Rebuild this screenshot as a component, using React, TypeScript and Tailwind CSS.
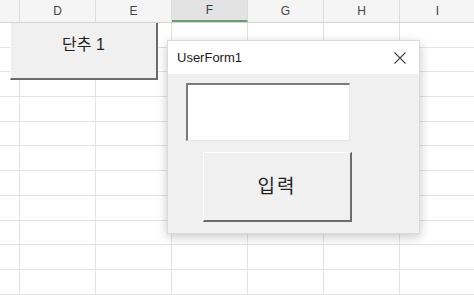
const cols = ['D', 'E', 'F', 'G', 'H', 'I']

export default function App() {
  const rows = Array.from({ length: 11 })

  return (
    <div className="relative w-[474px] h-[295px] overflow-hidden bg-white font-['Liberation_Sans','Noto_Sans_CJK_KR',sans-serif]">
      {/* column headers */}
      <div className="flex h-[23px] bg-[#f5f5f5] border-b border-[#d4d4d4]">
        <div className="w-[20px] shrink-0 border-r border-[#dcdcdc]" />
        {cols.map((c) => (
          <div
            key={c}
            className={
              c === 'F'
                ? 'w-[76px] shrink-0 flex items-center justify-center text-[12px] text-[#3b3b3b] bg-[#e3e3e3] border-r border-[#dcdcdc] border-b-2 border-b-[#6a9c7a]'
                : 'w-[76px] shrink-0 flex items-center justify-center text-[12px] text-[#444] border-r border-[#dcdcdc]'
            }
          >
            {c}
          </div>
        ))}
      </div>

      {/* cells */}
      {rows.map((_, i) => (
        <div key={i} className="flex h-[24.7px] border-b border-[#e3e3e3]">
          <div className="w-[20px] shrink-0 border-r border-[#e3e3e3]" />
          {cols.map((c) => (
            <div key={c} className="w-[76px] shrink-0 border-r border-[#e3e3e3]" />
          ))}
        </div>
      ))}

      {/* sheet button */}
      <div className="absolute left-[10px] top-[23px] w-[148px] h-[57px] bg-[#f0f0f0] border-l border-white border-r-2 border-b-2 border-r-[#6b6b6b] border-b-[#6b6b6b] flex justify-center pt-[14px]">
        <span className="text-[16px] text-[#222] leading-none">단추 1</span>
      </div>

      {/* UserForm */}
      <div className="absolute left-[167px] top-[40px] w-[253px] h-[194px] flex flex-col bg-[#f0f0f0] border border-[#dadada] shadow-[0_3px_10px_rgba(0,0,0,0.22)]">
        <div className="h-[33px] shrink-0 bg-white flex items-center justify-between pl-[9px] pr-[13px]">
          <span className="text-[13px] text-[#1a1a1a]">UserForm1</span>
          <svg width="12" height="12" viewBox="0 0 12 12" className="text-[#444]">
            <path d="M0.5 0.5 L11.5 11.5 M11.5 0.5 L0.5 11.5" stroke="currentColor" strokeWidth="1.1" fill="none" />
          </svg>
        </div>
        <div className="flex flex-col pl-[18px] pt-[9px]">
          <div className="w-[164px] h-[58px] bg-white border-t-2 border-l-2 border-[#7b7b7b] border-r border-b border-r-[#e6e6e6] border-b-[#e6e6e6]" />
          <div className="ml-[17px] mt-[11px] w-[149px] h-[70px] bg-[#f0f0f0] border-l border-t border-white border-r-2 border-b-2 border-r-[#6b6b6b] border-b-[#6b6b6b] flex items-center justify-center">
            <span className="text-[19px] text-[#222] tracking-[2px] leading-none">입력</span>
          </div>
        </div>
      </div>
    </div>
  )
}
